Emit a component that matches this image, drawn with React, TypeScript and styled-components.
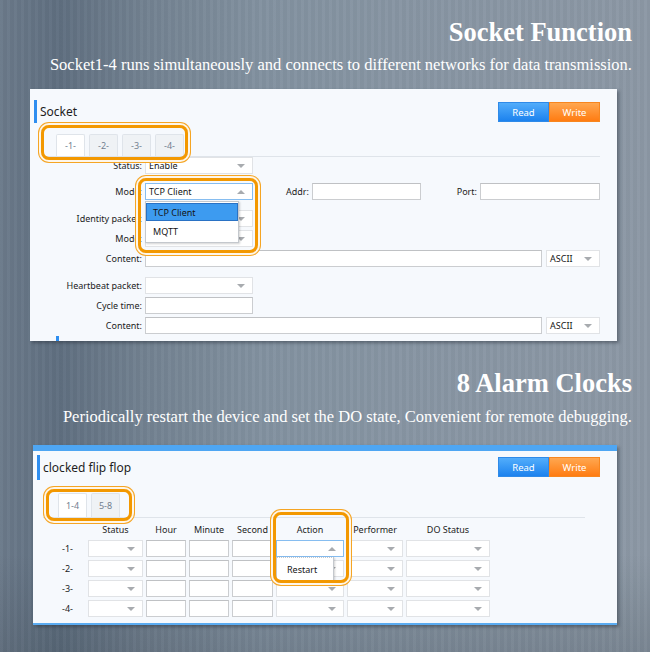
import styled, { createGlobalStyle, css } from "styled-components";

const ORANGE = "#f39800";

const GlobalStyle = createGlobalStyle`
  html, body {
    margin: 0;
    padding: 0;
  }

  body {
    width: 650px;
    height: 652px;
    overflow: hidden;
    font-family: "Noto Sans", "Open Sans", sans-serif;
  }
`;

interface SelectProps {
  width: number;
  value?: string;
  offset?: number;
  open?: boolean;
  options?: string[];
  selected?: number;
  dotted?: boolean;
  menuWidth?: number;
}

const Select: React.FC<SelectProps> = ({
  width,
  value,
  offset = 0,
  open = false,
  options,
  selected,
  dotted,
  menuWidth,
}) => (
  <SelectBox $width={width} $offset={offset} $open={open}>
    <SelectValue>{value}</SelectValue>
    <Caret $up={open} />
    {open && options && (
      <Menu $width={menuWidth ?? width} $dotted={dotted}>
        {options.map((option, i) => (
          <MenuItem key={option} $selected={i === selected} $dotted={dotted}>
            {option}
          </MenuItem>
        ))}
      </Menu>
    )}
  </SelectBox>
);

const SOCKET_TABS = ["-1-", "-2-", "-3-", "-4-"];
const CLOCK_TABS = ["1-4", "5-8"];
const CLOCK_COLUMNS = ["", "Status", "Hour", "Minute", "Second", "Action", "Performer", "DO Status"];

const App = () => {
  return (
    <Page>
      <GlobalStyle />

      <Intro $top={17}>
        <Title>Socket Function</Title>
        <Lead $gap={8}>
          Socket1-4 runs simultaneously and connects to different networks for data transmission.
        </Lead>
      </Intro>

      <Panel $left={30} $width={587} $top={14}>
        <PanelHead>
          <PanelTitle $height={23}>Socket</PanelTitle>
          <ButtonGroup>
            <ActionButton $variant="read">Read</ActionButton>
            <ActionButton $variant="write">Write</ActionButton>
          </ButtonGroup>
        </PanelHead>

        <TabBar $top={11} $left={10} $right={17} $inset={16}>
          {SOCKET_TABS.map((tab, i) => (
            <Tab key={tab} $active={i === 0} $height={22}>
              {tab}
            </Tab>
          ))}
        </TabBar>

        <FormRow $top={0}>
          <FieldLabel>Status:</FieldLabel>
          <Select width={108} value="Enable" />
        </FormRow>
        <FormRow $top={9}>
          <FieldLabel>Mode:</FieldLabel>
          <Select
            width={108}
            value="TCP Client"
            open
            options={["TCP Client", "MQTT"]}
            selected={0}
            menuWidth={94}
          />
          <FieldLabel $width={56}>Addr:</FieldLabel>
          <TextInput $width={109} />
          <FieldLabel $width={56}>Port:</FieldLabel>
          <TextInput $width={120} />
        </FormRow>
        <FormRow $top={10}>
          <FieldLabel>Identity packet:</FieldLabel>
          <Select width={108} />
        </FormRow>
        <FormRow $top={3}>
          <FieldLabel>Mode:</FieldLabel>
          <Select width={108} />
        </FormRow>
        <FormRow $top={3}>
          <FieldLabel>Content:</FieldLabel>
          <TextInput $width={397} />
          <Select width={54} value="ASCII" offset={4} />
        </FormRow>
        <FormRow $top={10}>
          <FieldLabel>Heartbeat packet:</FieldLabel>
          <Select width={108} />
        </FormRow>
        <FormRow $top={3}>
          <FieldLabel>Cycle time:</FieldLabel>
          <TextInput $width={108} />
        </FormRow>
        <FormRow $top={3}>
          <FieldLabel>Content:</FieldLabel>
          <TextInput $width={397} />
          <Select width={54} value="ASCII" offset={4} />
        </FormRow>
        <ScrollMark />

        <Highlight $x={11} $y={36} $w={147} $h={35} />
        <Highlight $x={108} $y={89} $w={120} $h={75} />
      </Panel>

      <Intro $top={27}>
        <Title>8 Alarm Clocks</Title>
        <Lead $gap={9}>
          Periodically restart the device and set the DO state, Convenient for remote debugging.
        </Lead>
      </Intro>

      <Panel $left={33} $width={584} $top={18} $framed>
        <PanelHead>
          <PanelTitle $height={25}>clocked flip flop</PanelTitle>
          <ButtonGroup>
            <ActionButton $variant="read">Read</ActionButton>
            <ActionButton $variant="write">Write</ActionButton>
          </ButtonGroup>
        </PanelHead>

        <TabBar $top={13} $left={10} $right={32} $inset={15}>
          {CLOCK_TABS.map((tab, i) => (
            <Tab key={tab} $active={i === 0} $height={24}>
              {tab}
            </Tab>
          ))}
        </TabBar>

        <ClockGrid>
          {CLOCK_COLUMNS.map((col, i) => (
            <ColumnHead key={i}>{col}</ColumnHead>
          ))}
          {[1, 2, 3, 4].map((row) => (
            <ClockRow key={row}>
              <RowLabel>-{row}-</RowLabel>
              <Select width={55} />
              <TextInput $width={40} />
              <TextInput $width={40} />
              <TextInput $width={41} />
              {row === 1 ? (
                <Select width={68} open options={["Restart"]} dotted menuWidth={58} />
              ) : (
                <Select width={68} />
              )}
              <Select width={56} />
              <Select width={84} />
            </ClockRow>
          ))}
        </ClockGrid>

        <Highlight $x={13} $y={38} $w={86} $h={32} />
        <Highlight $x={240} $y={61} $w={76} $h={71} />
      </Panel>
    </Page>
  );
};

const Page = styled.div`
  box-sizing: border-box;
  width: 650px;
  height: 652px;
  overflow: hidden;

  background:
    repeating-linear-gradient(
      90deg,
      rgba(255, 255, 255, 0.025) 0 3px,
      rgba(0, 0, 0, 0.025) 3px 7px
    ),
    linear-gradient(180deg, rgba(0, 0, 0, 0) 85%, rgba(40, 50, 60, 0.18) 100%),
    linear-gradient(
      90deg,
      #6b7a8a 0%,
      #5f6f80 9%,
      #728190 22%,
      #8291a0 40%,
      #8795a3 60%,
      #8c98a5 100%
    );
`;

interface IntroProps {
  $top: number;
}

const Intro = styled.header<IntroProps>`
  padding: ${({ $top }) => $top}px 18px 0 0;

  color: #fff;
  text-align: right;
  font-family: "Liberation Serif", "Times New Roman", serif;
`;

const Title = styled.h2`
  margin: 0;
  font-size: 26.5px;
  line-height: 30px;
  font-weight: 700;
`;

interface LeadProps {
  $gap: number;
}

const Lead = styled.p<LeadProps>`
  margin: ${({ $gap }) => $gap}px 0 0;
  font-size: 16.5px;
  line-height: 20px;
  white-space: nowrap;
`;

interface PanelProps {
  $left: number;
  $width: number;
  $top: number;
  $framed?: boolean;
}

const Panel = styled.section<PanelProps>`
  box-sizing: border-box;
  position: relative;

  width: ${({ $width }) => $width}px;
  margin: ${({ $top }) => $top}px 0 0 ${({ $left }) => $left}px;
  padding-top: 11px;

  background: #f6f9fd;
  box-shadow: 2px 2px 3px rgba(35, 45, 55, 0.45);

  ${({ $framed }) =>
    $framed &&
    css`
      padding-top: 4px;
      padding-bottom: 6px;
      border-top: 6px solid #4ea6f3;
      border-bottom: 2px solid #5aabf1;
    `}
`;

const PanelHead = styled.div`
  display: flex;
  justify-content: space-between;
  align-items: flex-start;
  margin: 0 17px 0 4px;
`;

interface PanelTitleProps {
  $height: number;
}

const PanelTitle = styled.h3<PanelTitleProps>`
  display: flex;
  align-items: center;
  height: ${({ $height }) => $height}px;
  margin: 0;
  padding-left: 3px;

  border-left: 3px solid #2e8ef0;
  color: #1e1e1e;
  font-size: 12px;
  font-weight: 400;
`;

const ButtonGroup = styled.div`
  display: flex;
  margin-top: 2px;
`;

interface ActionButtonProps {
  $variant: "read" | "write";
}

const ActionButton = styled.button<ActionButtonProps>`
  box-sizing: border-box;
  width: 51px;
  height: 20px;
  padding: 0;

  border: 1px solid
    ${({ $variant }) => ($variant === "read" ? "#2f8ae8" : "#f7861f")};
  background: ${({ $variant }) =>
    $variant === "read"
      ? "linear-gradient(180deg, #52adfb 0%, #1c82ee 100%)"
      : "linear-gradient(180deg, #ffa750 0%, #ff7c12 100%)"};
  color: #fff;
  font-family: "Noto Sans", sans-serif;
  font-size: 9.5px;
`;

interface TabBarProps {
  $top: number;
  $left: number;
  $right: number;
  $inset: number;
}

const TabBar = styled.div<TabBarProps>`
  display: flex;
  align-items: flex-end;
  gap: 4px;
  margin: ${({ $top, $right, $left }) => `${$top}px ${$right}px 0 ${$left}px`};
  padding-left: ${({ $inset }) => $inset}px;

  border-bottom: 1px solid #dfe4ea;
`;

interface TabProps {
  $active?: boolean;
  $height: number;
}

const Tab = styled.div<TabProps>`
  box-sizing: border-box;
  display: flex;
  justify-content: center;
  align-items: center;
  width: 29px;
  height: ${({ $height }) => $height}px;

  border: 1px solid #dfe4ea;
  border-bottom: none;
  border-radius: 2px 2px 0 0;
  background: ${({ $active }) => ($active ? "#ffffff" : "#eff2f5")};
  color: #738090;
  font-size: 9px;
`;

interface FormRowProps {
  $top: number;
}

const FormRow = styled.div<FormRowProps>`
  display: flex;
  align-items: center;
  height: 17px;
  margin-top: ${({ $top }) => $top}px;
`;

interface FieldLabelProps {
  $width?: number;
}

const FieldLabel = styled.label<FieldLabelProps>`
  flex: none;
  width: ${({ $width = 112 }) => $width}px;
  margin-right: 3px;

  color: #1c1c1c;
  font-size: 9px;
  text-align: right;
  white-space: nowrap;
`;

interface TextInputProps {
  $width: number;
}

const TextInput = styled.div<TextInputProps>`
  box-sizing: border-box;
  flex: none;
  width: ${({ $width }) => $width}px;
  height: 17px;

  border: 1px solid #cbcdd0;
  border-top-color: #bfc1c4;
  background: #fff;
`;

interface SelectBoxProps {
  $width: number;
  $offset: number;
  $open: boolean;
}

const SelectBox = styled.div<SelectBoxProps>`
  box-sizing: border-box;
  position: relative;
  flex: none;
  display: flex;
  align-items: center;
  width: ${({ $width }) => $width}px;
  height: 17px;
  margin-left: ${({ $offset }) => $offset}px;
  padding: 0 7px 0 3px;

  border: 1px solid ${({ $open }) => ($open ? "#86bdf0" : "#e1e3e6")};
  background: #fff;
  color: #151515;
  font-size: 9px;
`;

const SelectValue = styled.span`
  flex: 1;
  white-space: nowrap;
`;

interface CaretProps {
  $up?: boolean;
}

const Caret = styled.span<CaretProps>`
  width: 0;
  height: 0;
  border-left: 4px solid transparent;
  border-right: 4px solid transparent;

  ${({ $up }) =>
    $up
      ? css`
          border-bottom: 4px solid #a8abaf;
        `
      : css`
          border-top: 4px solid #a8abaf;
        `}
`;

interface MenuProps {
  $width: number;
  $dotted?: boolean;
}

const Menu = styled.div<MenuProps>`
  box-sizing: border-box;
  position: absolute;
  top: calc(100% + ${({ $dotted }) => ($dotted ? 1 : 2)}px);
  left: -1px;
  z-index: 2;

  width: ${({ $width }) => $width}px;
  padding: 1px 0;

  border: 1px solid #c4c8cd;
  border-top-style: ${({ $dotted }) => ($dotted ? "dotted" : "solid")};
  background: #fff;
  box-shadow: 1px 1px 2px rgba(0, 0, 0, 0.18);
`;

interface MenuItemProps {
  $selected?: boolean;
  $dotted?: boolean;
}

const MenuItem = styled.div<MenuItemProps>`
  box-sizing: border-box;
  display: flex;
  align-items: center;
  height: ${({ $dotted }) => ($dotted ? 21 : 18)}px;
  margin-bottom: 1px;
  padding-left: ${({ $dotted }) => ($dotted ? 9 : 6)}px;

  border: 1px solid ${({ $selected }) => ($selected ? "#2a72c4" : "transparent")};
  background: ${({ $selected }) => ($selected ? "#3d9bf0" : "transparent")};
  color: #151515;
  font-size: 9px;
`;

const ScrollMark = styled.div`
  width: 3px;
  height: 5px;
  margin: 2px 0 0 26px;

  background: #2e8ef0;
`;

const ClockGrid = styled.div`
  display: grid;
  grid-template-columns: 35px 55px 40px 40px 41px 68px 56px 84px;
  column-gap: 3px;
  row-gap: 3px;
  margin: 4px 0 0 17px;
`;

const ColumnHead = styled.div`
  display: flex;
  justify-content: center;
  align-items: center;
  height: 15px;

  color: #1c1c1c;
  font-size: 9px;
  white-space: nowrap;
`;

const ClockRow = styled.div`
  display: contents;
`;

const RowLabel = styled.div`
  display: flex;
  justify-content: center;
  align-items: center;
  height: 17px;

  color: #1c1c1c;
  font-size: 9px;
`;

interface HighlightProps {
  $x: number;
  $y: number;
  $w: number;
  $h: number;
}

const Highlight = styled.div<HighlightProps>`
  box-sizing: border-box;
  position: absolute;
  left: ${({ $x }) => $x}px;
  top: ${({ $y }) => $y}px;
  z-index: 3;

  width: ${({ $w }) => $w}px;
  height: ${({ $h }) => $h}px;

  border: 3px solid ${ORANGE};
  border-radius: 8px;
  box-shadow:
    0 0 0 2px rgba(255, 255, 255, 0.9),
    0 0 0 3px #f5a524;
  pointer-events: none;
`;

export default App;
